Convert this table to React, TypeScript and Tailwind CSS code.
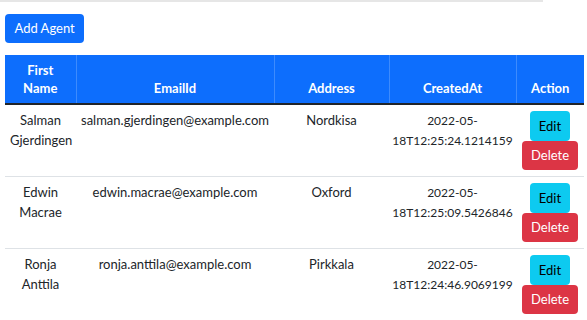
import React from 'react';

interface Agent {
  firstName: string;
  email: string;
  address: string;
  createdAt: string;
}

const agents: Agent[] = [
  { firstName: 'Salman Gjerdingen', email: 'salman.gjerdingen@example.com', address: 'Nordkisa', createdAt: '2022-05-18T12:25:24.1214159' },
  { firstName: 'Edwin Macrae', email: 'edwin.macrae@example.com', address: 'Oxford', createdAt: '2022-05-18T12:25:09.5426846' },
  { firstName: 'Ronja Anttila', email: 'ronja.anttila@example.com', address: 'Pirkkala', createdAt: '2022-05-18T12:24:46.9069199' },
];

const App: React.FC = () => {
  return (
    <div className="min-h-screen bg-white text-[13px] text-[#212529]" style={{ fontFamily: 'Lato, "Noto Sans", sans-serif' }}>
      {/* top rule */}
      <div className="w-[543px] h-[2px] bg-[#e6e6e6]" />

      <div className="px-[5px]">
        <button className="mt-[12px] h-[29px] px-[9.5px] rounded-[4px] bg-[#0d6efd] text-white text-[13px] leading-[19px]">
          Add Agent
        </button>

        <table className="mt-[12px] w-[579px] border-collapse table-fixed text-center">
          <colgroup>
            <col className="w-[71px]" />
            <col className="w-[198px]" />
            <col className="w-[115px]" />
            <col className="w-[127px]" />
            <col className="w-[68px]" />
          </colgroup>
          <thead>
            <tr className="bg-[#0d6efd] text-white border-b-2 border-b-[#212529]">
              <th className="align-bottom px-[5px] py-[6px] leading-[18px] font-bold">First Name</th>
              <th className="align-bottom px-[5px] py-[6px] leading-[18px] font-bold border-l border-[#3d8bfd]">EmailId</th>
              <th className="align-bottom px-[5px] py-[6px] leading-[18px] font-bold border-l border-[#3d8bfd]">Address</th>
              <th className="align-bottom px-[5px] py-[6px] leading-[18px] font-bold border-l border-[#3d8bfd]">CreatedAt</th>
              <th className="align-bottom px-[5px] py-[6px] leading-[18px] font-bold border-l border-[#3d8bfd]">Action</th>
            </tr>
          </thead>
          <tbody>
            {agents.map((a, i) => (
              <tr key={a.email} className={i < agents.length - 1 ? 'border-b border-[#dee2e6]' : ''}>
                <td className="align-top px-[5px] py-[6px] leading-[19.5px]">{a.firstName}</td>
                <td className="align-top px-[5px] py-[6px] leading-[19.5px]">{a.email}</td>
                <td className="align-top px-[5px] py-[6px] leading-[19.5px]">{a.address}</td>
                <td className="align-top px-[3px] py-[6px] leading-[19.5px] text-[12px]">{a.createdAt}</td>
                <td className="align-top px-[2px] py-[6px]">
                  <div className="flex flex-col items-center">
                    <button className="h-[30px] px-[9px] rounded-[4px] bg-[#0dcaf0] text-[#000] leading-[19px]">Edit</button>
                    <button className="h-[29px] px-[9px] rounded-[4px] bg-[#dc3545] text-white leading-[19px]">Delete</button>
                  </div>
                </td>
              </tr>
            ))}
          </tbody>
        </table>
      </div>
    </div>
  );
};

export default App;
